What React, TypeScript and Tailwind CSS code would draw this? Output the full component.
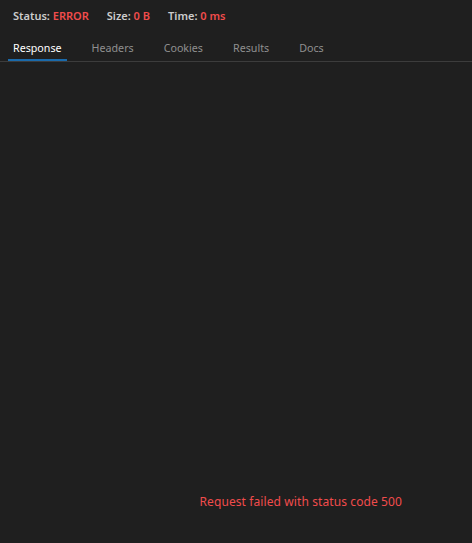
export default function App() {
  const tabs = ["Response", "Headers", "Cookies", "Results", "Docs"];
  return (
    <div
      className="flex h-[543px] w-full flex-col bg-[#1f1f1f] text-[12px] text-[#cccccc]"
      style={{ fontFamily: '"Noto Sans", "Open Sans", sans-serif' }}
    >
      {/* status bar */}
      <div className="flex h-[32px] items-center gap-[18px] pl-[13px] text-[11px] font-semibold">
        <span>
          Status: <span className="text-[#f14c4c]">ERROR</span>
        </span>
        <span>
          Size: <span className="text-[#f14c4c]">0 B</span>
        </span>
        <span>
          Time: <span className="text-[#f14c4c]">0 ms</span>
        </span>
      </div>

      {/* tabs */}
      <div className="flex border-b border-[#3c3c3c] pl-[8px] text-[10.7px] leading-[16px]">
        {tabs.map((t, i) => (
          <div
            key={t}
            className={`mr-[20px] border-b-2 px-[5px] pb-[3px] pt-[8px] ${
              i === 0 ? "border-[#1a6aab] text-white" : "border-transparent text-[#8f8f8f]"
            }`}
          >
            {t}
          </div>
        ))}
      </div>

      {/* body */}
      <div className="flex flex-1 items-end justify-end pb-[32px] pr-[70px]">
        <span className="tracking-[0.1px] text-[#f14c4c]">Request failed with status code 500</span>
      </div>
    </div>
  );
}
